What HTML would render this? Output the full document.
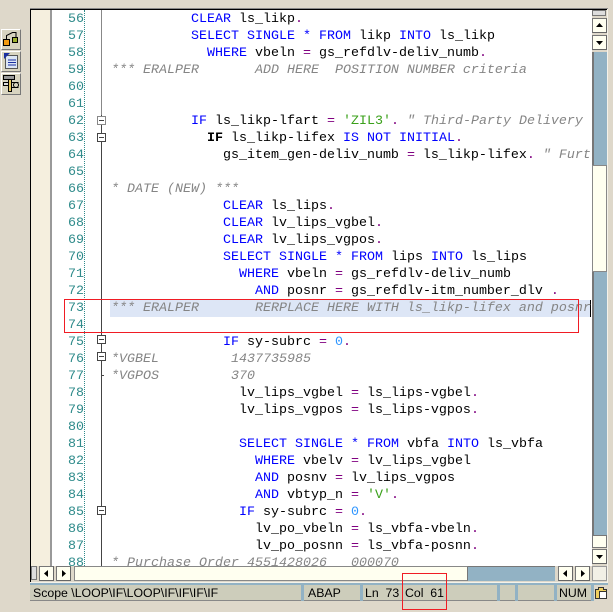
<!DOCTYPE html>
<html><head><meta charset="utf-8">
<style>
html,body{margin:0;padding:0;width:613px;height:612px;overflow:hidden;background:#ded8ca;position:relative}
div{position:absolute;box-sizing:border-box}
#ed{left:31px;top:10px;width:561px;height:556px;background:#fff;overflow:hidden}
.l{position:absolute;left:80px;margin-top:1px;white-space:pre;font:13.33px/17px "Liberation Mono",monospace;color:#000;height:17px}
.n{position:absolute;left:37px;margin-top:1px;width:16px;font:13.33px/17px "Liberation Mono",monospace;color:#2f8b8b;height:17px}
b{font-weight:normal;color:#0000ff}
i{font-style:normal;color:#800080}
u{text-decoration:none;color:#3aa01a}
s{text-decoration:none;color:#2f96ff}
em{color:#858585;font-style:italic}
.f{width:9px;height:9px;left:66px;background:#fff;border:1px solid #444}
.f:after{content:"";position:absolute;left:1px;top:3px;width:5px;height:1px;background:#444}
.btn{width:15px;height:15px;background:#fffff0;border:1px solid #777;border-right-color:#666;border-bottom-color:#666}
.ts{background:#cdcdbb;top:587px;height:13px}
.st{position:absolute;top:586px;font:12.3px/15px "Liberation Sans",sans-serif;color:#000;white-space:pre}
.sep{top:585px;width:3px;height:16px;background:#92b2c4}
</style></head><body>
<div style="left:30px;top:8px;width:578px;height:1px;background:#888"></div>
<div style="left:30px;top:9px;width:577px;height:1px;background:#000"></div>
<div style="left:30px;top:9px;width:1px;height:573px;background:#000"></div>
<div style="left:607px;top:9px;width:1px;height:573px;background:#f4f2ea"></div>
<div style="left:31px;top:10px;width:576px;height:572px;background:#ded8ca"></div>

<div id="ed">
<div style="left:0;top:0;width:19px;height:556px;background:#f5efde"></div>
<div style="left:19px;top:0;width:2px;height:556px;background:#999"></div>
<div style="left:53px;top:0;width:1px;height:556px;border-left:1px dotted #2f8b8b"></div>
<div style="left:70px;top:0;width:1px;height:105px;background:#888"></div>
<div style="left:70px;top:105px;width:1px;height:451px;background:#444"></div>
<div style="left:79px;top:290px;width:481px;height:17px;background:#dde6f6"></div>
<div style="left:559px;top:290px;width:1px;height:17px;background:#000"></div>

<div class="n" style="top:0">56</div><div class="l" style="top:0">          <b>CLEAR</b> ls_likp<i>.</i></div>
<div class="n" style="top:17px">57</div><div class="l" style="top:17px">          <b>SELECT SINGLE</b> <i style="color:#00f">*</i> <b>FROM</b> likp <b>INTO</b> ls_likp</div>
<div class="n" style="top:34px">58</div><div class="l" style="top:34px">            <b>WHERE</b> vbeln <i>=</i> gs_refdlv-deliv_numb<i>.</i></div>
<div class="n" style="top:51px">59</div><div class="l" style="top:51px"><em>*** ERALPER       ADD HERE  POSITION NUMBER criteria</em></div>
<div class="n" style="top:68px">60</div>
<div class="n" style="top:85px">61</div>
<div class="n" style="top:102px">62</div><div class="l" style="top:102px">          <b>IF</b> ls_likp-lfart <i>=</i> <u>'ZIL3'</u><i>.</i> <em>" Third-Party Delivery</em></div>
<div class="n" style="top:119px">63</div><div class="l" style="top:119px">            <strong>IF</strong> ls_likp-lifex <b>IS NOT INITIAL</b><i>.</i></div>
<div class="n" style="top:136px">64</div><div class="l" style="top:136px">              gs_item_gen-deliv_numb <i>=</i> ls_likp-lifex<i>.</i> <em>" Furt</em></div>
<div class="n" style="top:153px">65</div>
<div class="n" style="top:170px">66</div><div class="l" style="top:170px"><em>* DATE (NEW) ***</em></div>
<div class="n" style="top:187px">67</div><div class="l" style="top:187px">              <b>CLEAR</b> ls_lips<i>.</i></div>
<div class="n" style="top:204px">68</div><div class="l" style="top:204px">              <b>CLEAR</b> lv_lips_vgbel<i>.</i></div>
<div class="n" style="top:221px">69</div><div class="l" style="top:221px">              <b>CLEAR</b> lv_lips_vgpos<i>.</i></div>
<div class="n" style="top:238px">70</div><div class="l" style="top:238px">              <b>SELECT SINGLE</b> <i style="color:#00f">*</i> <b>FROM</b> lips <b>INTO</b> ls_lips</div>
<div class="n" style="top:255px">71</div><div class="l" style="top:255px">                <b>WHERE</b> vbeln <i>=</i> gs_refdlv-deliv_numb</div>
<div class="n" style="top:272px">72</div><div class="l" style="top:272px">                  <b>AND</b> posnr <i>=</i> gs_refdlv-itm_number_dlv <i>.</i></div>
<div class="n" style="top:289px">73</div><div class="l" style="top:289px"><em>*** ERALPER       RERPLACE HERE WITH ls_likp-lifex and posnr</em></div>
<div class="n" style="top:306px">74</div>
<div class="n" style="top:323px">75</div><div class="l" style="top:323px">              <b>IF</b> sy-subrc <i>=</i> <s>0</s><i>.</i></div>
<div class="n" style="top:340px">76</div><div class="l" style="top:340px"><em>*VGBEL         1437735985</em></div>
<div class="n" style="top:357px">77</div><div class="l" style="top:357px"><em>*VGPOS         370</em></div>
<div class="n" style="top:374px">78</div><div class="l" style="top:374px">                lv_lips_vgbel <i>=</i> ls_lips-vgbel<i>.</i></div>
<div class="n" style="top:391px">79</div><div class="l" style="top:391px">                lv_lips_vgpos <i>=</i> ls_lips-vgpos<i>.</i></div>
<div class="n" style="top:408px">80</div>
<div class="n" style="top:425px">81</div><div class="l" style="top:425px">                <b>SELECT SINGLE</b> <i style="color:#00f">*</i> <b>FROM</b> vbfa <b>INTO</b> ls_vbfa</div>
<div class="n" style="top:442px">82</div><div class="l" style="top:442px">                  <b>WHERE</b> vbelv <i>=</i> lv_lips_vgbel</div>
<div class="n" style="top:459px">83</div><div class="l" style="top:459px">                  <b>AND</b> posnv <i>=</i> lv_lips_vgpos</div>
<div class="n" style="top:476px">84</div><div class="l" style="top:476px">                  <b>AND</b> vbtyp_n <i>=</i> <u>'V'</u><i>.</i></div>
<div class="n" style="top:493px">85</div><div class="l" style="top:493px">                <b>IF</b> sy-subrc <i>=</i> <s>0</s><i>.</i></div>
<div class="n" style="top:510px">86</div><div class="l" style="top:510px">                  lv_po_vbeln <i>=</i> ls_vbfa-vbeln<i>.</i></div>
<div class="n" style="top:527px">87</div><div class="l" style="top:527px">                  lv_po_posnn <i>=</i> ls_vbfa-posnn<i>.</i></div>
<div class="n" style="top:544px">88</div><div class="l" style="top:544px"><em>* Purchase Order 4551428026   000070</em></div>

<div class="f" style="top:106px;border-color:#888"></div>
<div class="f" style="top:123px"></div>
<div class="f" style="top:325px"></div>
<div class="f" style="top:342px"></div>
<div class="f" style="top:496px"></div>
<div style="left:70px;top:365px;width:3px;height:1px;background:#444"></div>
</div>

<!-- vertical scrollbar -->
<div style="left:592px;top:10px;width:15px;height:572px;background:#ded8ca"></div>
<div style="left:592px;top:10px;width:14px;height:6px;background:#ddd;border:1px solid #777"></div>
<div class="btn" style="left:592px;top:18px"><svg width="13" height="13" style="position:absolute;left:0;top:0"><path d="M3 8h7L6.5 4z" fill="#000"/></svg></div>
<div class="btn" style="left:592px;top:35px"><svg width="13" height="13" style="position:absolute;left:0;top:0"><path d="M3 5h7L6.5 9z" fill="#000"/></svg></div>
<div style="left:592px;top:52px;width:15px;height:483px;background:#92b2c4;border-left:2px solid #777"></div>
<div style="left:592px;top:165px;width:15px;height:107px;background:#fffff0;border:1px solid #888"></div>
<div style="left:592px;top:535px;width:15px;height:13px;background:#fffff0;border:1px solid #777"></div>
<div class="btn" style="left:592px;top:549px"><svg width="13" height="13" style="position:absolute;left:0;top:0"><path d="M3 5h7L6.5 9z" fill="#000"/></svg></div>

<!-- horizontal scrollbar -->
<div style="left:31px;top:566px;width:561px;height:16px;background:#ded8ca"></div>
<div style="left:31px;top:566px;width:6px;height:14px;background:#ddd;border:1px solid #777"></div>
<div class="btn" style="left:39px;top:566px"><svg width="13" height="13" style="position:absolute;left:0;top:0"><path d="M8 3v7L4 6.5z" fill="#000"/></svg></div>
<div class="btn" style="left:56px;top:566px"><svg width="13" height="13" style="position:absolute;left:0;top:0"><path d="M5 3v7L9 6.5z" fill="#000"/></svg></div>
<div style="left:74px;top:566px;width:394px;height:15px;background:#fffff0;border:1px solid #888;border-right-color:#777"></div>
<div style="left:468px;top:566px;width:87px;height:15px;background:#92b2c4;border-top:1px solid #777"></div>
<div class="btn" style="left:558px;top:566px"><svg width="13" height="13" style="position:absolute;left:0;top:0"><path d="M8 3v7L4 6.5z" fill="#000"/></svg></div>
<div class="btn" style="left:575px;top:566px"><svg width="13" height="13" style="position:absolute;left:0;top:0"><path d="M5 3v7L9 6.5z" fill="#000"/></svg></div>
<div style="left:592px;top:566px;width:15px;height:15px;background:#f2f0e6;border:1px solid #999"></div>

<!-- status bar -->
<div style="left:30px;top:582px;width:578px;height:1px;background:#f4f2ea"></div>
<div style="left:30px;top:583px;width:578px;height:2px;background:#92b2c4"></div>
<div class="ts" style="left:30px;width:563px;top:585px;height:16px;border-bottom:1px solid #888"></div>
<div class="sep" style="left:301px"></div>
<div class="sep" style="left:360px"></div>
<div class="sep" style="left:497px"></div>
<div class="sep" style="left:515px"></div>
<div class="sep" style="left:554px"></div>
<div class="sep" style="left:591px"></div>
<span class="st" style="left:33px">Scope \LOOP\IF\LOOP\IF\IF\IF\IF</span>
<span class="st" style="left:308px">ABAP</span>
<span class="st" style="left:365px">Ln  73</span>
<span class="st" style="left:405px">Col  61</span>
<span class="st" style="left:559px">NUM</span>
<svg style="position:absolute;left:594px;top:586px" width="14" height="14"><path d="M1.5 3.5h3v-2h5v2h3v9h-11z" fill="#f0d060" stroke="#333"/><path d="M5.5 5.5h7v7h-7z" fill="#fff" stroke="#333"/></svg>

<!-- left toolbar -->
<div style="left:1px;top:29px;width:20px;height:21px;background:#d8d4c0;border:1px solid #fff;border-right-color:#777;border-bottom-color:#777"></div>
<div style="left:1px;top:51px;width:20px;height:21px;background:#d8d4c0;border:1px solid #fff;border-right-color:#777;border-bottom-color:#777"></div>
<div style="left:1px;top:73px;width:20px;height:22px;background:#d8d4c0;border:1px solid #fff;border-right-color:#777;border-bottom-color:#777"></div>
<svg style="position:absolute;left:2px;top:30px" width="18" height="18"><path d="M4.5 9V5.5L10.5 2.5H14V7" fill="none" stroke="#000"/><rect x="1.5" y="9.5" width="6" height="6" fill="#f39a10" stroke="#000"/><rect x="10.5" y="7.5" width="5" height="5" fill="#9db030" stroke="#000"/></svg>
<svg style="position:absolute;left:2px;top:52px" width="18" height="18"><rect x="3.5" y="3.5" width="12" height="13" fill="#dce6f5" stroke="#555"/><path d="M2 1h6L2 7z" fill="#1a2fa0"/><path d="M6 8h8M6 10.5h8M6 13h8" stroke="#1a2fa0"/></svg>
<svg style="position:absolute;left:2px;top:74px" width="18" height="19"><path d="M1.5 1.5h11v4h-11z" fill="#999" stroke="#000"/><path d="M6.5 5.5h3v12h-3z" fill="#e8c860" stroke="#000"/><path d="M1.5 8.5h5v3h-5z" fill="#ddd" stroke="#000"/><path d="M9.5 8.5h7M9.5 13.5h7" stroke="#000"/><circle cx="14" cy="11" r="2.5" fill="none" stroke="#000"/></svg>

<!-- red annotation rects -->
<div style="left:64px;top:299px;width:515px;height:34px;border:1px solid #f01c24"></div>
<div style="left:402px;top:573px;width:45px;height:37px;border:1px solid #f01c24"></div>
</body></html>
